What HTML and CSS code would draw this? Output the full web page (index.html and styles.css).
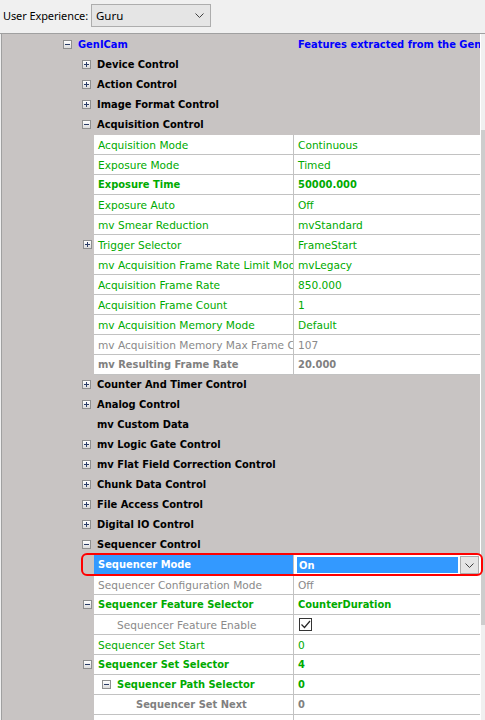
FILE: index.html
```html
<!DOCTYPE html>
<html>
<head>
<meta charset="utf-8">
<title>Property Grid</title>
<link rel="stylesheet" href="styles.css">
</head>
<body>
<div class="toolbar">
  <span class="tb-label">User Experience:</span>
  <div class="combo">
    <span class="combo-text">Guru</span>
    <svg class="combo-chev" width="9" height="5" viewBox="0 0 9 5"><path d="M0.5 0.5 L4.5 4.5 L8.5 0.5" fill="none" stroke="#404040" stroke-width="1"/></svg>
  </div>
</div>
<div class="main">
  <div class="grid">
    <div class="row cat">
      <div class="cat-label l0"><span class="tog minus"></span><span class="t-blue">GenICam</span></div>
      <div class="cat-value t-blue">Features extracted from the GenICam description</div>
    </div>
    <div class="row cat"><div class="cat-label l1"><span class="tog plus"></span><span>Device Control</span></div><div class="cat-value"></div></div>
    <div class="row cat"><div class="cat-label l1"><span class="tog plus"></span><span>Action Control</span></div><div class="cat-value"></div></div>
    <div class="row cat"><div class="cat-label l1"><span class="tog plus"></span><span>Image Format Control</span></div><div class="cat-value"></div></div>
    <div class="row cat"><div class="cat-label l1"><span class="tog minus"></span><span>Acquisition Control</span></div><div class="cat-value"></div></div>

    <div class="row prop green"><div class="gut"></div><div class="name">Acquisition Mode</div><div class="val">Continuous</div></div>
    <div class="row prop green"><div class="gut"></div><div class="name">Exposure Mode</div><div class="val">Timed</div></div>
    <div class="row prop green bold"><div class="gut"></div><div class="name">Exposure Time</div><div class="val">50000.000</div></div>
    <div class="row prop green"><div class="gut"></div><div class="name">Exposure Auto</div><div class="val">Off</div></div>
    <div class="row prop green"><div class="gut"></div><div class="name">mv Smear Reduction</div><div class="val">mvStandard</div></div>
    <div class="row prop green"><div class="gut"><span class="tog plus"></span></div><div class="name">Trigger Selector</div><div class="val">FrameStart</div></div>
    <div class="row prop green"><div class="gut"></div><div class="name">mv Acquisition Frame Rate Limit Mode</div><div class="val">mvLegacy</div></div>
    <div class="row prop green"><div class="gut"></div><div class="name">Acquisition Frame Rate</div><div class="val">850.000</div></div>
    <div class="row prop green"><div class="gut"></div><div class="name">Acquisition Frame Count</div><div class="val">1</div></div>
    <div class="row prop green"><div class="gut"></div><div class="name">mv Acquisition Memory Mode</div><div class="val">Default</div></div>
    <div class="row prop gray"><div class="gut"></div><div class="name">mv Acquisition Memory Max Frame Count</div><div class="val">107</div></div>
    <div class="row prop gray bold"><div class="gut"></div><div class="name">mv Resulting Frame Rate</div><div class="val">20.000</div></div>

    <div class="row cat"><div class="cat-label l1"><span class="tog plus"></span><span>Counter And Timer Control</span></div><div class="cat-value"></div></div>
    <div class="row cat"><div class="cat-label l1"><span class="tog plus"></span><span>Analog Control</span></div><div class="cat-value"></div></div>
    <div class="row cat"><div class="cat-label l1"><span class="tog none"></span><span>mv Custom Data</span></div><div class="cat-value"></div></div>
    <div class="row cat"><div class="cat-label l1"><span class="tog plus"></span><span>mv Logic Gate Control</span></div><div class="cat-value"></div></div>
    <div class="row cat"><div class="cat-label l1"><span class="tog plus"></span><span>mv Flat Field Correction Control</span></div><div class="cat-value"></div></div>
    <div class="row cat"><div class="cat-label l1"><span class="tog plus"></span><span>Chunk Data Control</span></div><div class="cat-value"></div></div>
    <div class="row cat"><div class="cat-label l1"><span class="tog plus"></span><span>File Access Control</span></div><div class="cat-value"></div></div>
    <div class="row cat"><div class="cat-label l1"><span class="tog plus"></span><span>Digital IO Control</span></div><div class="cat-value"></div></div>
    <div class="row cat"><div class="cat-label l1"><span class="tog minus"></span><span>Sequencer Control</span></div><div class="cat-value"></div></div>

    <div class="row prop selected">
      <div class="gut"></div>
      <div class="name">Sequencer Mode</div>
      <div class="val edit">
        <div class="edit-box">On</div>
        <div class="drop-btn"><svg width="9" height="5" viewBox="0 0 9 5"><path d="M0.5 0.5 L4.5 4.5 L8.5 0.5" fill="none" stroke="#404040" stroke-width="1"/></svg></div>
      </div>
    </div>
    <div class="row prop gray"><div class="gut"></div><div class="name">Sequencer Configuration Mode</div><div class="val">Off</div></div>
    <div class="row prop green bold"><div class="gut"><span class="tog minus"></span></div><div class="name">Sequencer Feature Selector</div><div class="val">CounterDuration</div></div>
    <div class="row prop gray"><div class="gut"></div><div class="name ind2">Sequencer Feature Enable</div><div class="val"><span class="check"><svg width="11" height="11" viewBox="0 0 11 11"><path d="M1.5 5.5 L4.5 8.5 L10 2" fill="none" stroke="#262626" stroke-width="1.2"/></svg></span></div></div>
    <div class="row prop green"><div class="gut"></div><div class="name">Sequencer Set Start</div><div class="val">0</div></div>
    <div class="row prop green bold"><div class="gut"><span class="tog minus"></span></div><div class="name">Sequencer Set Selector</div><div class="val">4</div></div>
    <div class="row prop green bold"><div class="gut"></div><div class="name ind1"><span class="tog minus"></span><span>Sequencer Path Selector</span></div><div class="val">0</div></div>
    <div class="row prop gray bold"><div class="gut"></div><div class="name ind3">Sequencer Set Next</div><div class="val">0</div></div>
    <div class="row prop green"><div class="gut"></div><div class="name ind2">&nbsp;</div><div class="val">&nbsp;</div></div>
  </div>
  <div class="vscroll"><div class="thumb"></div></div>
  <div class="highlight"></div>
</div>
</body>
</html>
```
FILE: styles.css
```css
html, body {
  margin: 0;
  padding: 0;
  width: 485px;
  height: 720px;
  overflow: hidden;
  background: #f0f0f0;
}

.toolbar {
  height: 34px;
  display: flex;
  align-items: center;
  padding-left: 3px;
  padding-bottom: 2px;
  box-sizing: border-box;
  border-bottom: 1px solid #a0a0a0;
  font-family: "Noto Sans", "Liberation Sans", sans-serif;
  font-size: 11px;
  color: #000;
}

.tb-label {
  width: 88px;
  white-space: nowrap;
  letter-spacing: -0.1px;
}

.combo {
  width: 120px;
  height: 23px;
  box-sizing: border-box;
  border: 1px solid #adadad;
  background: #e5e5e5;
  display: flex;
  align-items: center;
  padding-left: 4px;
  padding-right: 6px;
  font-size: 11.5px;
}

.combo-text {
  flex: 1;
}

.combo-chev {
  display: block;
}

.main {
  position: relative;
  display: flex;
  height: 686px;
  padding-left: 1px;
  overflow: hidden;
}

.grid {
  width: 478px;
  border-left: 1px solid #a0a0a0;
  background: #c8c4c3;
  padding-top: 1px;
  font-family: "DejaVu Sans", "Liberation Sans", sans-serif;
  font-size: 10.6px;
  overflow: hidden;
  flex: none;
}

.row {
  display: grid;
  grid-template-columns: 92px 200px 186px;
  height: 20px;
}

.cat .cat-label {
  grid-column: 1 / 3;
  display: flex;
  align-items: center;
  font-weight: bold;
  font-stretch: condensed;
  font-size: 11px;
  color: #000;
  white-space: nowrap;
  height: 19px;
}

.cat .l0 { padding-left: 61px; }
.cat .l1 { padding-left: 80px; }

.cat-value {
  display: flex;
  align-items: center;
  padding-left: 4px;
  font-weight: bold;
  font-stretch: condensed;
  font-size: 11px;
  white-space: nowrap;
  overflow: hidden;
  height: 19px;
}

.t-blue { color: #0000ff; }

.tog {
  display: inline-block;
  width: 9px;
  height: 9px;
  box-sizing: border-box;
  border: 1px solid #8e8f8f;
  background: linear-gradient(#ffffff, #dcdcdc);
  margin-right: 6px;
  position: relative;
  flex: none;
}

.tog.none {
  border: none;
  background: none;
}

.tog.plus::before,
.tog.minus::before {
  content: "";
  position: absolute;
  left: 1px;
  top: 3px;
  width: 5px;
  height: 1px;
  background: #2a3c66;
}

.tog.plus::after {
  content: "";
  position: absolute;
  left: 3px;
  top: 1px;
  width: 1px;
  height: 5px;
  background: #2a3c66;
}

.prop .gut {
  display: flex;
  align-items: center;
  padding-left: 81px;
  height: 19px;
}

.prop .name,
.prop .val {
  background: #ffffff;
  height: 19px;
  border-bottom: 1px solid #c2c2c2;
  display: flex;
  align-items: center;
  white-space: nowrap;
  overflow: hidden;
}

.prop .name {
  border-right: 1px solid #c2c2c2;
  padding-left: 4px;
}

.prop .val {
  padding-left: 4px;
}

.prop .name.ind1 { padding-left: 8px; }
.prop .name.ind1 .tog { margin-right: 6px; }
.prop .name.ind2 { padding-left: 23px; }
.prop .name.ind3 { padding-left: 42px; }

.green { color: #00aa00; }
.gray { color: #8a8a8a; }
.bold {
  font-weight: bold;
  font-stretch: condensed;
  font-size: 11px;
}
.gray.bold { color: #808080; }

.selected .name {
  background: #3399ff;
  color: #ffffff;
  font-weight: bold;
  font-stretch: condensed;
  font-size: 11px;
}

.selected .val.edit {
  padding-left: 3px;
  padding-right: 1px;
  align-items: stretch;
}

.edit-box {
  flex: 1;
  margin: 2px 2px 1px 0;
  background: #3399ff;
  color: #ffffff;
  font-weight: bold;
  font-stretch: condensed;
  font-size: 11px;
  display: flex;
  align-items: center;
  padding-left: 2px;
}

.drop-btn {
  width: 19px;
  margin: 1px 0 0 0;
  box-sizing: border-box;
  border: 1px solid #adadad;
  background: #e5e5e5;
  display: flex;
  align-items: center;
  justify-content: center;
}

.drop-btn svg { display: block; }

.check {
  display: inline-flex;
  width: 13px;
  height: 13px;
  box-sizing: border-box;
  border: 1px solid #333333;
  background: #ffffff;
  align-items: center;
  justify-content: center;
  margin-left: 1px;
}

.check svg { display: block; }

.vscroll {
  flex: none;
  width: 17px;
  border-left: 1px solid #ffffff;
  background: #f0f0f0;
  position: relative;
}

.thumb {
  position: absolute;
  left: 0;
  top: 96px;
  width: 15px;
  height: 495px;
  background: #cdcdcd;
}

.highlight {
  position: absolute;
  left: 81px;
  top: 519px;
  width: 402px;
  height: 23px;
  box-sizing: border-box;
  border: 2px solid #ff0000;
  border-radius: 6px;
  pointer-events: none;
}
```
